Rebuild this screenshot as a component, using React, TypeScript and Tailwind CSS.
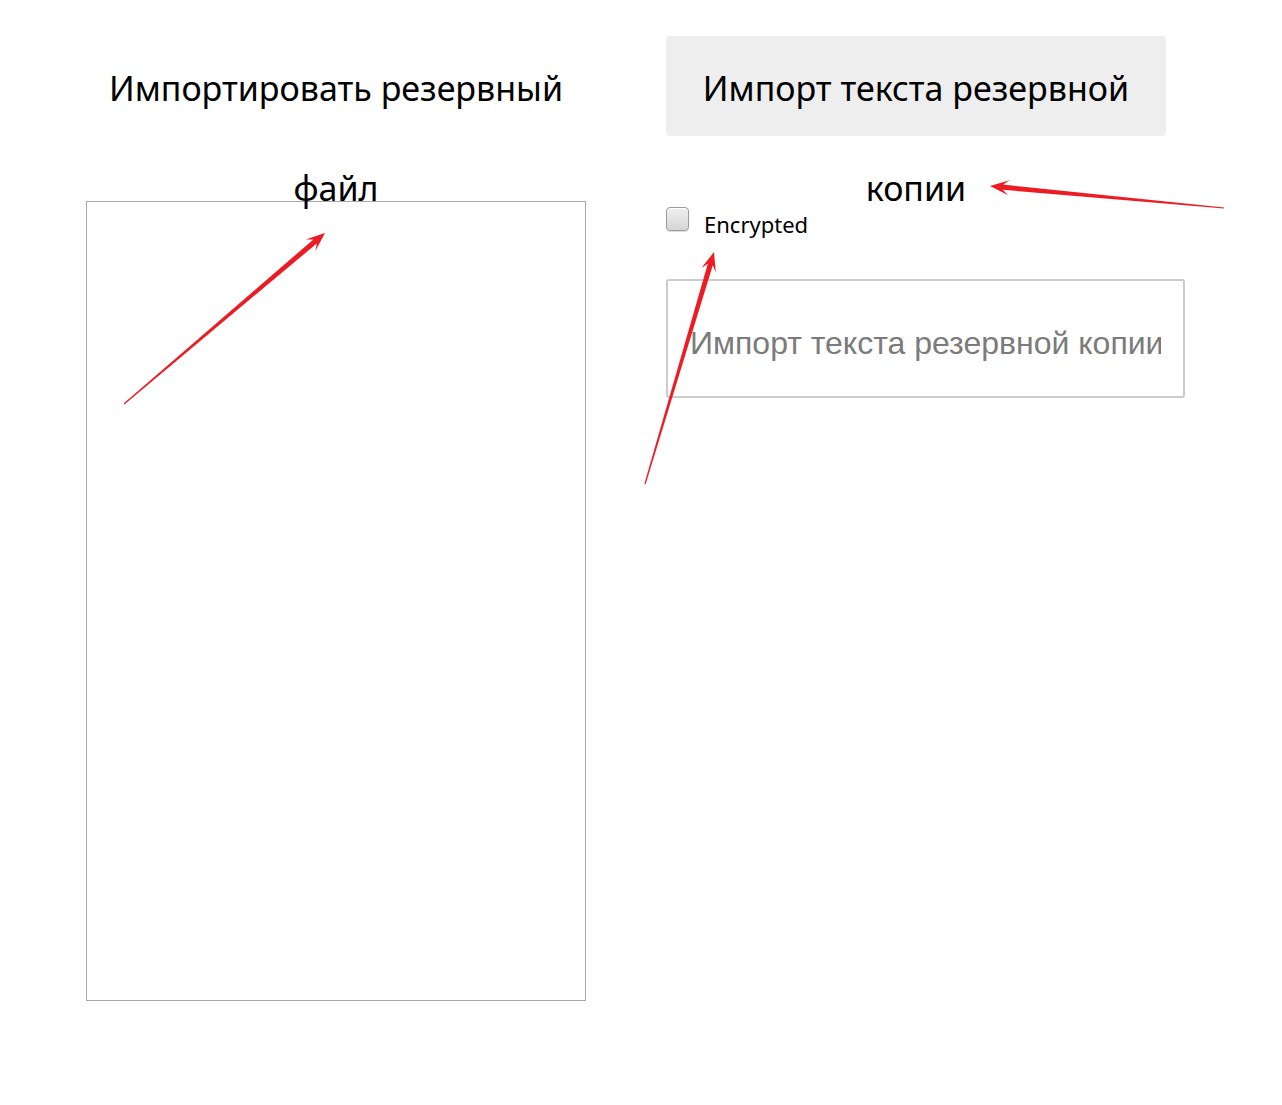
import React from "react";

type Pt = [number, number];

// tapered red annotation arrow, drawn as one polygon
function arrowPoints(tail: Pt, tip: Pt, shaft = 2.6, head = 19, barb = 7.5): string {
  const dx = tip[0] - tail[0];
  const dy = tip[1] - tail[1];
  const len = Math.hypot(dx, dy);
  const ux = dx / len;
  const uy = dy / len;
  const nx = -uy;
  const ny = ux;
  const at = (back: number, side: number): Pt => [
    tip[0] - ux * back + nx * side,
    tip[1] - uy * back + ny * side,
  ];
  const pts: Pt[] = [
    [tail[0] + nx * 0.6, tail[1] + ny * 0.6],
    at(head - 6, shaft),
    at(head, barb),
    [tip[0], tip[1]],
    at(head, -barb),
    at(head - 6, -shaft),
    [tail[0] - nx * 0.6, tail[1] - ny * 0.6],
  ];
  return pts.map((p) => `${p[0].toFixed(1)},${p[1].toFixed(1)}`).join(" ");
}

const arrows: { tail: Pt; tip: Pt }[] = [
  { tail: [124, 404], tip: [325, 233] },
  { tail: [1224, 208], tip: [990, 186] },
  { tail: [645, 484], tip: [714, 252] },
];

export default function App() {
  return (
    <div className="relative min-h-[1105px] w-full bg-white font-['Noto_Sans','Open_Sans',sans-serif] text-black">
      <div className="flex gap-[80px] pl-[86px] pt-[36px]">
        {/* file import */}
        <div className="flex w-[500px] flex-col">
          <button className="h-[100px] w-[500px] bg-transparent text-center text-[34px] leading-[100px] text-black">
            <span className="block translate-y-[2px]">Импортировать резервный файл</span>
          </button>
          <div className="mt-[65px] h-[800px] w-[500px] border border-[#a9a9a9]" />
        </div>

        {/* text import */}
        <div className="flex w-[520px] flex-col">
          <button className="h-[100px] w-[500px] rounded-[4px] bg-[#eeeeee] text-center text-[34px] leading-[100px] text-black">
            <span className="block translate-y-[2px]">Импорт текста резервной копии</span>
          </button>
          <label className="mt-[71px] flex items-start gap-[15px]">
            <span className="h-[24px] w-[23px] rounded-[4px] border border-[#9c9c9c] bg-gradient-to-b from-[#f0f0f0] to-[#d6d6d6] shadow-[inset_0_1px_0_#fff,0_1px_1px_rgba(0,0,0,0.15)]" />
            <span className="mt-[3px] text-[22px] leading-[28px]">Encrypted</span>
          </label>
          <input
            type="text"
            placeholder="Импорт текста резервной копии"
            className="mt-[41px] h-[119px] w-[519px] rounded-[3px] border-2 border-[#cccccc] bg-white px-[22px] pt-[9px] font-['Liberation_Sans',Arial,sans-serif] text-[32px] text-black outline-none placeholder:text-[#7b7b7b]"
          />
        </div>
      </div>

      <svg className="pointer-events-none absolute left-0 top-0" width="1282" height="1105">
        {arrows.map((a, i) => (
          <polygon key={i} points={arrowPoints(a.tail, a.tip)} fill="#ed1c24" />
        ))}
      </svg>
    </div>
  );
}
